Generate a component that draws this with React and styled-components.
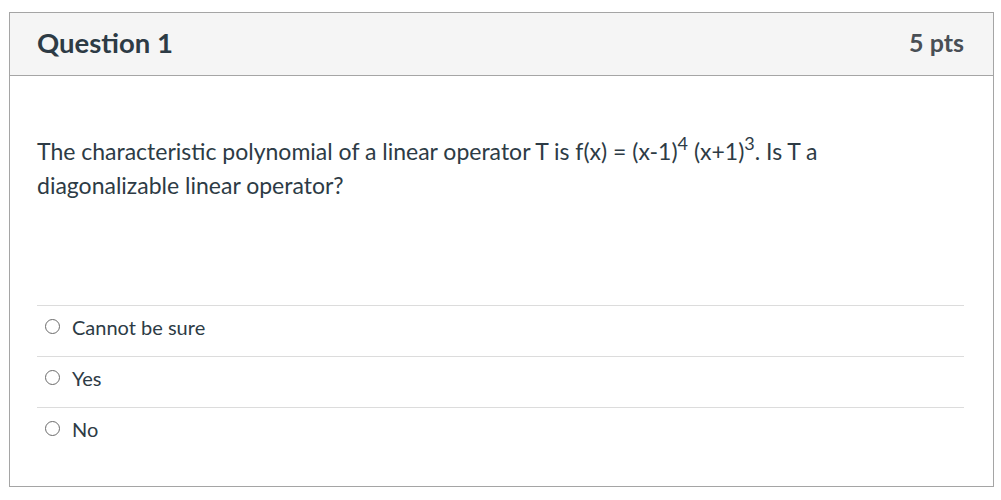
import React from "react";
import styled, { createGlobalStyle } from "styled-components";

const GlobalStyle = createGlobalStyle`
  body {
    margin: 0;
    background: #fff;
    font-family: Lato, "Liberation Sans", sans-serif;
    color: #2d3b45;
  }
`;

const answers = ["Cannot be sure", "Yes", "No"];

export default function App() {
  return (
    <>
      <GlobalStyle />
      <Page>
        <Card>
          <Header>
            <Title>Question 1</Title>
            <Points>5 pts</Points>
          </Header>
          <Body>
            <QuestionText>
              The characteristic polynomial of a linear operator T is f(x) = (x-1)<sup>4</sup> (x+1)<sup>3</sup>. Is T a
              diagonalizable linear operator?
            </QuestionText>
            <Answers>
              {answers.map((a) => (
                <Answer key={a}>
                  <Radio />
                  <span>{a}</span>
                </Answer>
              ))}
            </Answers>
          </Body>
        </Card>
      </Page>
    </>
  );
}

const Page = styled.div`
  padding: 12px 7px 0 9px;
`;

const Card = styled.div`
  border: 1px solid #a5a5a5;
  height: 475px;
  box-sizing: border-box;
  display: flex;
  flex-direction: column;
`;

const Header = styled.div`
  display: flex;
  justify-content: space-between;
  align-items: center;
  height: 63px;
  padding: 0 29px 4px 27px;
  box-sizing: border-box;
  background: #f5f5f5;
  border-bottom: 1px solid #a5a5a5;
`;

const Title = styled.h2`
  margin: 0;
  font-size: 27.5px;
  font-weight: 700;
  color: #2d3b45;
`;

const Points = styled.div`
  font-size: 25px;
  font-weight: 700;
  color: #494f55;
`;

const Body = styled.div`
  padding: 58px 29px 0 27px;
`;

const QuestionText = styled.p`
  margin: 0;
  font-size: 23px;
  line-height: 34px;
  color: #2d3b45;
  max-width: 820px;

  sup {
    font-size: 18px;
    line-height: 0;
    vertical-align: 10px;
  }
`;

const Answers = styled.div`
  margin-top: 103px;
`;

const Answer = styled.label`
  display: flex;
  align-items: center;
  gap: 12px;
  height: 51px;
  box-sizing: border-box;
  padding: 0 0 9px 8px;
  border-top: 1px solid #dcdcdc;
  font-size: 20px;
  color: #2d3b45;
`;

const Radio = styled.span`
  width: 15px;
  height: 15px;
  border: 1px solid #6b6b6b;
  border-radius: 50%;
  box-sizing: border-box;
  flex: none;
`;
